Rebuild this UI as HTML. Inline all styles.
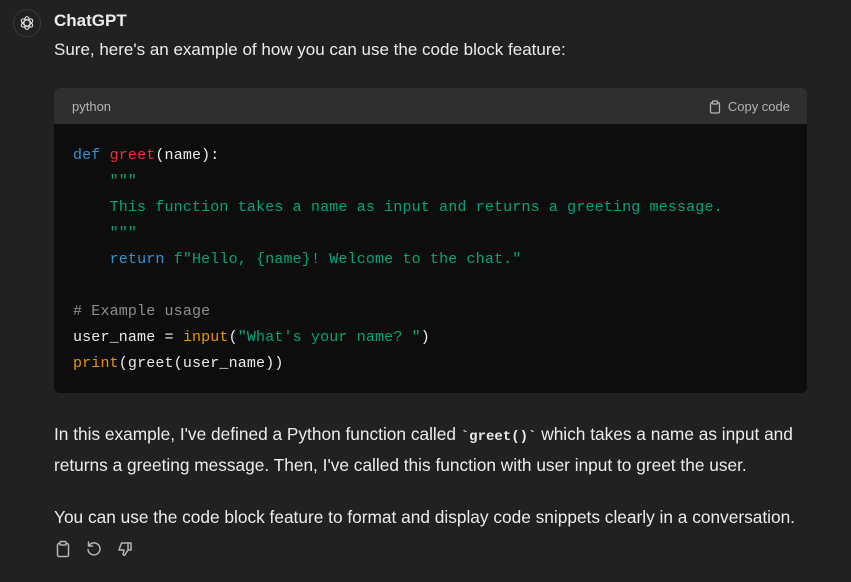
<!DOCTYPE html>
<html><head><meta charset="utf-8"><style>
*{margin:0;padding:0;box-sizing:border-box}
body{width:851px;height:582px;background:#212121;color:#ececec;font-family:"Liberation Sans",sans-serif;position:relative;overflow:hidden}
.av{position:absolute;left:13px;top:9px;width:28px;height:28px;border-radius:50%;border:1px solid #3a3a3a;display:flex;align-items:center;justify-content:center}
.name{position:absolute;left:54px;top:11px;font-weight:bold;font-size:17px}
.t{position:absolute;left:54px;font-size:17.3px;white-space:nowrap;color:#ececec}
.cb{position:absolute;left:54px;top:88px;width:753px;height:305px;border-radius:6px;overflow:hidden;background:#0d0d0d}
.hd{height:36px;background:#2f2f2f;font-size:13px;color:#b4b4b4;position:relative}
.hd .l{position:absolute;left:18px;top:11px}
.hd .r{position:absolute;right:17px;top:11px;display:flex;align-items:center;gap:6px}
pre{font-family:"Liberation Mono",monospace;font-size:15px;letter-spacing:0.15px;line-height:26px;color:#ececec;padding:19px 19px}
.k{color:#2e95d3}.f{color:#f22c3d}.s{color:#00a67d}.c{color:#8e8e8e}.b{color:#e9950c}
code{font-family:"Liberation Mono",monospace;font-weight:bold;font-size:14px}
.ic{position:absolute;top:540px}
</style></head><body>
<div class="av"><svg width="18" height="18" viewBox="0 0 24 24" fill="none" stroke="#ddd" stroke-width="1.4"><g transform="translate(12 12)"><ellipse rx="4" ry="8.5"/><ellipse rx="4" ry="8.5" transform="rotate(60)"/><ellipse rx="4" ry="8.5" transform="rotate(120)"/></g></svg></div>
<div class="name">ChatGPT</div>
<div class="t" style="top:40px;font-size:17px">Sure, here's an example of how you can use the code block feature:</div>
<div class="cb">
<div class="hd"><span class="l">python</span><span class="r"><svg width="14" height="14" viewBox="0 0 14 14" fill="none" stroke="#b4b4b4" stroke-width="1.3"><rect x="2.5" y="2.5" width="9" height="10.5" rx="1.5"/><rect x="4.5" y="1" width="5" height="3" rx="0.8" fill="#2f2f2f"/></svg>Copy code</span></div>
<pre><span class="k">def</span> <span class="f">greet</span>(name):
    <span class="s">"""
    This function takes a name as input and returns a greeting message.
    """</span>
    <span class="k">return</span> <span class="s">f"Hello, {name}! Welcome to the chat."</span>

<span class="c"># Example usage</span>
user_name = <span class="b">input</span>(<span class="s">"What's your name? "</span>)
<span class="b">print</span>(greet(user_name))</pre>
</div>
<div class="t" style="top:424px">In this example, I've defined a Python function called <code>`greet()`</code> which takes a name as input and</div>
<div class="t" style="top:455px">returns a greeting message. Then, I've called this function with user input to greet the user.</div>
<div class="t" style="top:507px">You can use the code block feature to format and display code snippets clearly in a conversation.</div>
<svg class="ic" style="left:54px" width="18" height="18" viewBox="0 0 18 18" fill="none" stroke="#b4b4b4" stroke-width="1.5"><rect x="3.5" y="3.5" width="11" height="13" rx="1.5"/><rect x="6" y="1.5" width="6" height="3.5" rx="1" fill="#212121"/></svg>
<svg class="ic" style="left:85px" width="18" height="18" viewBox="0 0 18 18" fill="none" stroke="#b4b4b4" stroke-width="1.5" stroke-linecap="round"><path d="M4 5.5A6 6 0 1 1 3 9.5"/><path d="M3.5 2v4h4"/></svg>
<svg class="ic" style="left:116px" width="18" height="18" viewBox="0 0 18 18" fill="none" stroke="#b4b4b4" stroke-width="1.5" stroke-linejoin="round"><path d="M12 3H5.5L3 10h5l-1 4.5 1.5 1L12 10V3zM12 3h3v7h-3"/></svg>
</body></html>
